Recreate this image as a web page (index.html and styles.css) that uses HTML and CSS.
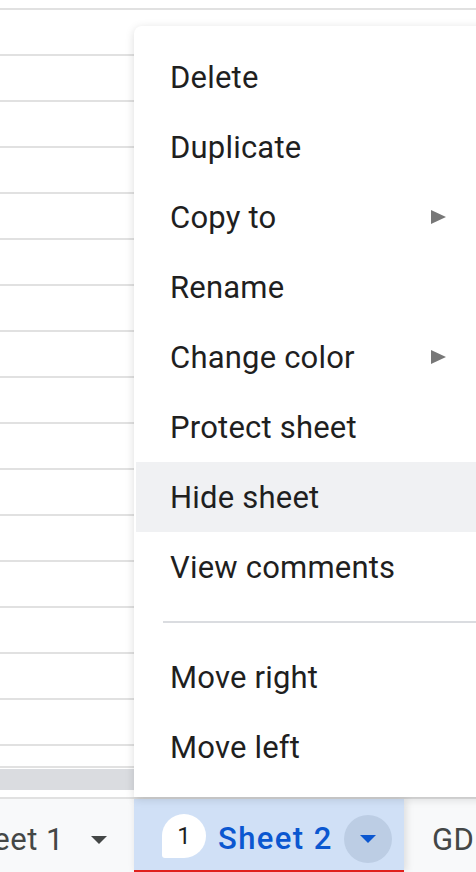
FILE: index.html
```html
<!DOCTYPE html>
<html>
	<head>
		<link rel="stylesheet" href="styles.css">
	</head>
	<body>
		<div class="sheet">
			<div class="grid">
				<div class="row first"></div>
				<div class="row"></div>
				<div class="row"></div>
				<div class="row"></div>
				<div class="row"></div>
				<div class="row"></div>
				<div class="row"></div>
				<div class="row"></div>
				<div class="row"></div>
				<div class="row"></div>
				<div class="row"></div>
				<div class="row"></div>
				<div class="row"></div>
				<div class="row"></div>
				<div class="row"></div>
				<div class="row"></div>
				<div class="row"></div>
				<div class="row short"></div>
				<div class="scrollbar"></div>
			</div>

			<div class="tabs">
				<div class="tab tab-cut">
					<span class="tab-name">Sheet 1</span>
					<span class="caret"></span>
				</div>
				<div class="tab tab-active">
					<span class="badge">1</span>
					<span class="tab-name">Sheet 2</span>
					<span class="tab-drop"><span class="caret blue"></span></span>
				</div>
				<div class="tab tab-next">
					<span class="tab-name">GD</span>
				</div>
			</div>
		</div>

		<div class="menu">
			<div class="item">Delete</div>
			<div class="item">Duplicate</div>
			<div class="item">Copy to<span class="sub"></span></div>
			<div class="item">Rename</div>
			<div class="item">Change color<span class="sub"></span></div>
			<div class="item">Protect sheet</div>
			<div class="item hover">Hide sheet</div>
			<div class="item">View comments</div>
			<div class="divider"></div>
			<div class="item">Move right</div>
			<div class="item">Move left</div>
		</div>
	</body>
</html>
```

FILE: styles.css
```css
body {
	margin: 0;
	width: 476px;
	height: 872px;
	overflow: hidden;
	position: relative;
	background-color: #fff;
	font-family: Roboto, "Liberation Sans", sans-serif;
	color: #1f1f1f;
}

.sheet {
	display: flex;
	flex-direction: column;
	height: 872px;
}

.grid {
	height: 797px;
	display: flex;
	flex-direction: column;
}
.row {
	height: 44px;
	border-bottom: 2px solid #e1e1e1;
	flex-shrink: 0;
}
.row.first {
	height: 8px;
}
.row.short {
	height: 20px;
}
.scrollbar {
	height: 21px;
	margin-top: 1px;
	background-color: #dadce0;
}

.tabs {
	flex: 1;
	display: flex;
	align-items: stretch;
	background-color: #f8f9fa;
	border-top: 2px solid #e1e1e1;
}
.tab {
	display: flex;
	align-items: center;
	flex-shrink: 0;
	box-sizing: border-box;
	padding-top: 8px;
}
.tab-name {
	font-size: 31px;
	color: #444746;
	letter-spacing: 0.5px;
	white-space: nowrap;
}

.tab-cut {
	width: 134px;
	justify-content: flex-end;
	overflow: hidden;
	padding-right: 27px;
	gap: 27px;
}

.caret {
	width: 0;
	height: 0;
	border-left: 8px solid transparent;
	border-right: 8px solid transparent;
	border-top: 8px solid #444746;
	flex-shrink: 0;
}
.caret.blue {
	border-top-color: #0b57d0;
}

.tab-active {
	width: 270px;
	padding-left: 28px;
	background-color: #d0e0f6;
	border-bottom: 2px solid #e0201c;
	box-shadow: 2px 0 8px rgba(0, 0, 0, 0.12);
}
.tab-active .tab-name {
	color: #0b57d0;
	font-weight: 500;
	letter-spacing: 1.4px;
	margin-left: 12px;
}
.badge {
	width: 44px;
	height: 44px;
	margin-top: -6px;
	border-radius: 22px 22px 22px 3px;
	background-color: #fff;
	display: flex;
	align-items: center;
	justify-content: center;
	font-size: 24px;
	color: #1f1f1f;
}
.tab-drop {
	width: 48px;
	height: 48px;
	border-radius: 50%;
	background-color: #bccde4;
	margin-left: 11px;
	display: flex;
	align-items: center;
	justify-content: center;
}

.tab-next {
	padding-left: 28px;
}

.menu {
	position: absolute;
	left: 134px;
	top: 26px;
	width: 360px;
	padding: 16px 0 15px;
	background-color: #fff;
	border-radius: 8px 0 0 0;
	box-shadow: 0 2px 10px rgba(0, 0, 0, 0.14);
}
.item {
	height: 70px;
	display: flex;
	align-items: center;
	padding-left: 36px;
	font-size: 31px;
	letter-spacing: 0.2px;
	color: #1f1f1f;
	position: relative;
}
.item.hover {
	background-color: #f0f1f3;
	margin-left: 2px;
	padding-left: 34px;
}
.sub {
	position: absolute;
	left: 297px;
	width: 0;
	height: 0;
	border-top: 7.5px solid transparent;
	border-bottom: 7.5px solid transparent;
	border-left: 15px solid #777;
}
.divider {
	height: 2px;
	margin: 19px 0 19px 29px;
	background-color: #dadce0;
}
```
